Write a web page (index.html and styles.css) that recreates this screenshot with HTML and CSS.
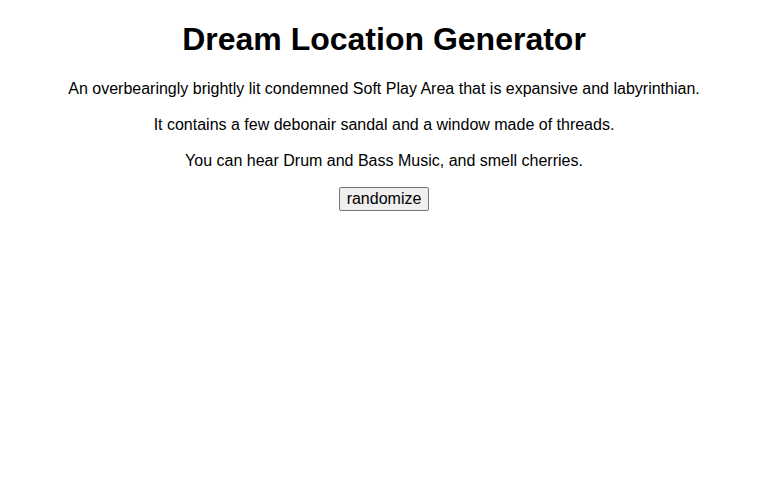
FILE: index.html
```html
<!DOCTYPE html>
<html lang="en">
<head>
    <meta charset="UTF-8">
    <meta name="viewport" content="width=device-width, initial-scale=1.0">
    <title>Dream Location Generator</title>
    <link rel="stylesheet" href="styles.css">
</head>
<body>
    <h1>Dream Location Generator</h1>

    <!-- generated description -->
    <div class="dream">
        <p id="place">An overbearingly brightly lit condemned Soft Play Area that is expansive and labyrinthian.</p>
        <p id="items">It contains a few debonair sandal and a window made of threads.</p>
        <p id="senses">You can hear Drum and Bass Music, and smell cherries.</p>
    </div>

    <button id="randomize" class="randomize">randomize</button>
</body>
</html>
```

FILE: styles.css
```css
body {
    font-family: "Liberation Sans", Arial, sans-serif;
    color: #000;
    background-color: #fff;
    margin: 8px;
    text-align: center;
}

h1 {
    font-size: 32px;
    margin: 13px 0 21px;
    line-height: 37px;
}

.dream p {
    font-size: 16px;
    line-height: 20px;
    margin: 16px 0;
}

.randomize {
    font-family: "Liberation Sans", Arial, sans-serif;
    font-size: 16px;
    line-height: 18px;
    padding: 2px 7px;
    background-color: #efefef;
    border: 1px solid #767676;
    border-radius: 2px;
    color: #000;
}
```
